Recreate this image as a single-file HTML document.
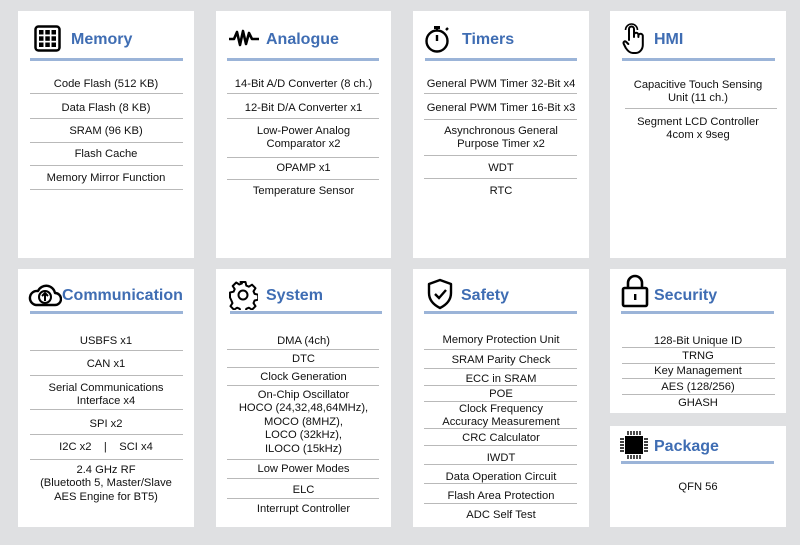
<!DOCTYPE html>
<html><head><meta charset="utf-8"><style>
*{margin:0;padding:0;box-sizing:border-box}
body{width:800px;height:545px;background:#dfe0e2;position:relative;overflow:hidden;font-family:"Liberation Sans",Arial,sans-serif;color:#111}
.c{position:absolute;background:#fff}
.t{position:absolute;font-size:11.2px;line-height:13.5px;text-align:center;white-space:nowrap;margin-top:1.5px}
.s{position:absolute;height:1px;background:#b9b9b9}
.b{position:absolute;height:3px;background:#9bb4d8}
.h{position:absolute;font-size:16px;font-weight:bold;color:#3f6db3;line-height:18px;margin-top:1px}
svg{position:absolute}
</style></head><body>
<div class="c" style="left:18px;top:11px;width:176px;height:247px"></div>
<div class="c" style="left:216px;top:11px;width:175px;height:247px"></div>
<div class="c" style="left:413px;top:11px;width:176px;height:247px"></div>
<div class="c" style="left:610px;top:11px;width:176px;height:247px"></div>
<div class="c" style="left:18px;top:269px;width:176px;height:258px"></div>
<div class="c" style="left:216px;top:269px;width:175px;height:258px"></div>
<div class="c" style="left:413px;top:269px;width:176px;height:258px"></div>
<div class="c" style="left:610px;top:269px;width:176px;height:144px"></div>
<div class="c" style="left:610px;top:426px;width:176px;height:101px"></div>

<!-- Memory -->
<svg style="left:34px;top:25px" width="27" height="27" viewBox="0 0 27 27"><rect x="1.5" y="1.5" width="24" height="24" rx="3" fill="none" stroke="#000" stroke-width="2.5"/><g fill="#000"><rect x="5" y="5" width="4.5" height="4.5"/><rect x="11.3" y="5" width="4.5" height="4.5"/><rect x="17.5" y="5" width="4.5" height="4.5"/><rect x="5" y="11.3" width="4.5" height="4.5"/><rect x="11.3" y="11.3" width="4.5" height="4.5"/><rect x="17.5" y="11.3" width="4.5" height="4.5"/><rect x="5" y="17.5" width="4.5" height="4.5"/><rect x="11.3" y="17.5" width="4.5" height="4.5"/><rect x="17.5" y="17.5" width="4.5" height="4.5"/></g></svg>
<div class="h" style="left:71px;top:30px">Memory</div>
<div class="b" style="left:30px;top:58px;width:153px"></div>
<div class="t" style="left:18px;width:176px;top:76px">Code Flash (512 KB)</div>
<div class="s" style="left:30px;top:93px;width:153px"></div>
<div class="t" style="left:18px;width:176px;top:100px">Data Flash (8 KB)</div>
<div class="s" style="left:30px;top:118px;width:153px"></div>
<div class="t" style="left:18px;width:176px;top:123px">SRAM (96 KB)</div>
<div class="s" style="left:30px;top:142px;width:153px"></div>
<div class="t" style="left:18px;width:176px;top:146px">Flash Cache</div>
<div class="s" style="left:30px;top:165px;width:153px"></div>
<div class="t" style="left:18px;width:176px;top:170px">Memory Mirror Function</div>
<div class="s" style="left:30px;top:189px;width:153px"></div>

<!-- Analogue -->
<svg style="left:228px;top:28px" width="32" height="20" viewBox="0 0 32 20"><path d="M1 11H6L9 4L12 17L15 3L18 16L21 5L24 11H31" fill="none" stroke="#000" stroke-width="2.6" stroke-linejoin="round"/></svg>
<div class="h" style="left:266px;top:30px">Analogue</div>
<div class="b" style="left:227px;top:58px;width:152px"></div>
<div class="t" style="left:216px;width:175px;top:76px">14-Bit A/D Converter (8 ch.)</div>
<div class="s" style="left:227px;top:93px;width:152px"></div>
<div class="t" style="left:216px;width:175px;top:100px">12-Bit D/A Converter x1</div>
<div class="s" style="left:227px;top:118px;width:152px"></div>
<div class="t" style="left:216px;width:175px;top:123px">Low-Power Analog<br>Comparator x2</div>
<div class="s" style="left:227px;top:157px;width:152px"></div>
<div class="t" style="left:216px;width:175px;top:160px">OPAMP x1</div>
<div class="s" style="left:227px;top:179px;width:152px"></div>
<div class="t" style="left:216px;width:175px;top:183px">Temperature Sensor</div>

<!-- Timers -->
<svg style="left:424px;top:24px" width="28" height="30" viewBox="0 0 28 30"><circle cx="13" cy="17" r="10.5" fill="none" stroke="#000" stroke-width="2.4"/><rect x="10" y="2" width="6" height="3" fill="#000"/><rect x="12" y="4" width="2" height="3" fill="#000"/><line x1="22" y1="6" x2="24" y2="4" stroke="#000" stroke-width="2.4"/><line x1="13" y1="11" x2="13" y2="17" stroke="#000" stroke-width="2.4"/></svg>
<div class="h" style="left:462px;top:30px">Timers</div>
<div class="b" style="left:425px;top:58px;width:152px"></div>
<div class="t" style="left:413px;width:176px;top:76px">General PWM Timer 32-Bit x4</div>
<div class="s" style="left:424px;top:93px;width:153px"></div>
<div class="t" style="left:413px;width:176px;top:100px">General PWM Timer 16-Bit x3</div>
<div class="s" style="left:424px;top:119px;width:153px"></div>
<div class="t" style="left:413px;width:176px;top:123px">Asynchronous General<br>Purpose Timer x2</div>
<div class="s" style="left:424px;top:155px;width:153px"></div>
<div class="t" style="left:413px;width:176px;top:160px">WDT</div>
<div class="s" style="left:424px;top:178px;width:153px"></div>
<div class="t" style="left:413px;width:176px;top:183px">RTC</div>

<!-- HMI -->
<svg style="left:622px;top:23px" width="24" height="32" viewBox="0 0 24 32"><path d="M7 17V6a2.5 2.5 0 0 1 5 0v8M12 12a2.2 2.2 0 0 1 4.4 0v2M16.4 13a2.2 2.2 0 0 1 4.4 0v9c0 4-3 8-7 8h-3c-3 0-5-2-7-5l-2-4c-1-2 1-3.5 2.5-2l2 2" fill="none" stroke="#000" stroke-width="2" stroke-linejoin="round" stroke-linecap="round"/><path d="M3.5 7a6 6 0 0 1 12 0" fill="none" stroke="#000" stroke-width="1.6"/></svg>
<div class="h" style="left:654px;top:30px">HMI</div>
<div class="b" style="left:622px;top:58px;width:153px"></div>
<div class="t" style="left:610px;width:176px;top:77px">Capacitive Touch Sensing<br>Unit (11 ch.)</div>
<div class="s" style="left:625px;top:108px;width:152px"></div>
<div class="t" style="left:610px;width:176px;top:114px">Segment LCD Controller<br>4com x 9seg</div>

<!-- Communication -->
<svg style="left:28px;top:281px" width="34" height="26" viewBox="0 0 34 26"><path d="M8 24H27a6 6 0 0 0 0-12a9 9 0 0 0-17-2A7 7 0 0 0 8 24Z" fill="none" stroke="#000" stroke-width="2.4" stroke-linejoin="round"/><circle cx="17" cy="16" r="6" fill="none" stroke="#000" stroke-width="2"/><path d="M17 20V12M14 15l3-3 3 3" fill="none" stroke="#000" stroke-width="2"/></svg>
<div class="h" style="left:62px;top:286px">Communication</div>
<div class="b" style="left:30px;top:311px;width:153px"></div>
<div class="t" style="left:18px;width:176px;top:333px">USBFS x1</div>
<div class="s" style="left:30px;top:350px;width:153px"></div>
<div class="t" style="left:18px;width:176px;top:356px">CAN x1</div>
<div class="s" style="left:30px;top:375px;width:153px"></div>
<div class="t" style="left:18px;width:176px;top:380px">Serial Communications<br>Interface x4</div>
<div class="s" style="left:30px;top:409px;width:153px"></div>
<div class="t" style="left:18px;width:176px;top:416px">SPI x2</div>
<div class="s" style="left:30px;top:434px;width:153px"></div>
<div class="t" style="left:18px;width:176px;top:439px">I2C x2 &nbsp;&nbsp; | &nbsp;&nbsp; SCI x4</div>
<div class="s" style="left:30px;top:459px;width:153px"></div>
<div class="t" style="left:18px;width:176px;top:462px">2.4 GHz RF<br>(Bluetooth 5, Master/Slave<br>AES Engine for BT5)</div>

<!-- System -->
<svg style="left:228px;top:280px" width="30" height="30" viewBox="0 0 30 30"><path d="M12.5 2h5l.8 3.6 2.6 1.1 3.1-2 3.5 3.5-2 3.1 1.1 2.6 3.6.8v5l-3.6.8-1.1 2.6 2 3.1-3.5 3.5-3.1-2-2.6 1.1-.8 3.6h-5l-.8-3.6-2.6-1.1-3.1 2-3.5-3.5 2-3.1-1.1-2.6L2 17.5v-5l3.6-.8 1.1-2.6-2-3.1 3.5-3.5 3.1 2 2.6-1.1Z" fill="none" stroke="#000" stroke-width="2" stroke-linejoin="round"/><circle cx="15" cy="15" r="4.5" fill="none" stroke="#000" stroke-width="2"/></svg>
<div class="h" style="left:266px;top:286px">System</div>
<div class="b" style="left:230px;top:311px;width:152px"></div>
<div class="t" style="left:216px;width:175px;top:333px">DMA (4ch)</div>
<div class="s" style="left:227px;top:349px;width:152px"></div>
<div class="t" style="left:216px;width:175px;top:351px">DTC</div>
<div class="s" style="left:227px;top:367px;width:152px"></div>
<div class="t" style="left:216px;width:175px;top:369px">Clock Generation</div>
<div class="s" style="left:227px;top:385px;width:152px"></div>
<div class="t" style="left:216px;width:175px;top:387px">On-Chip Oscillator<br>HOCO (24,32,48,64MHz),<br>MOCO (8MHZ),<br>LOCO (32kHz),<br>ILOCO (15kHz)</div>
<div class="s" style="left:227px;top:459px;width:152px"></div>
<div class="t" style="left:216px;width:175px;top:461px">Low Power Modes</div>
<div class="s" style="left:227px;top:478px;width:152px"></div>
<div class="t" style="left:216px;width:175px;top:482px">ELC</div>
<div class="s" style="left:227px;top:498px;width:152px"></div>
<div class="t" style="left:216px;width:175px;top:501px">Interrupt Controller</div>

<!-- Safety -->
<svg style="left:426px;top:278px" width="28" height="32" viewBox="0 0 28 32"><path d="M14 2L25 6V15C25 22 20 27 14 30C8 27 3 22 3 15V6Z" fill="none" stroke="#000" stroke-width="2.4" stroke-linejoin="round"/><path d="M9 16l4 4 7-8" fill="none" stroke="#000" stroke-width="2.4"/></svg>
<div class="h" style="left:461px;top:286px">Safety</div>
<div class="b" style="left:424px;top:311px;width:153px"></div>
<div class="t" style="left:413px;width:176px;top:332px">Memory Protection Unit</div>
<div class="s" style="left:424px;top:349px;width:153px"></div>
<div class="t" style="left:413px;width:176px;top:352px">SRAM Parity Check</div>
<div class="s" style="left:424px;top:368px;width:153px"></div>
<div class="t" style="left:413px;width:176px;top:371px">ECC in SRAM</div>
<div class="s" style="left:424px;top:385px;width:153px"></div>
<div class="t" style="left:413px;width:176px;top:386px">POE</div>
<div class="s" style="left:424px;top:401px;width:153px"></div>
<div class="t" style="left:413px;width:176px;top:401px">Clock Frequency<br>Accuracy Measurement</div>
<div class="s" style="left:424px;top:428px;width:153px"></div>
<div class="t" style="left:413px;width:176px;top:430px">CRC Calculator</div>
<div class="s" style="left:424px;top:445px;width:153px"></div>
<div class="t" style="left:413px;width:176px;top:450px">IWDT</div>
<div class="s" style="left:424px;top:464px;width:153px"></div>
<div class="t" style="left:413px;width:176px;top:469px">Data Operation Circuit</div>
<div class="s" style="left:424px;top:483px;width:153px"></div>
<div class="t" style="left:413px;width:176px;top:488px">Flash Area Protection</div>
<div class="s" style="left:424px;top:503px;width:153px"></div>
<div class="t" style="left:413px;width:176px;top:507px">ADC Self Test</div>

<!-- Security -->
<svg style="left:621px;top:274px" width="28" height="34" viewBox="0 0 28 34"><path d="M7 14V9a7 7 0 0 1 14 0v5" fill="none" stroke="#000" stroke-width="2.6"/><rect x="2" y="14" width="24" height="18" rx="1.5" fill="none" stroke="#000" stroke-width="2.6"/><rect x="13" y="20" width="2.4" height="6" fill="#000"/></svg>
<div class="h" style="left:654px;top:286px">Security</div>
<div class="b" style="left:621px;top:311px;width:153px"></div>
<div class="t" style="left:610px;width:176px;top:333px">128-Bit Unique ID</div>
<div class="s" style="left:622px;top:347px;width:153px"></div>
<div class="t" style="left:610px;width:176px;top:348px">TRNG</div>
<div class="s" style="left:622px;top:363px;width:153px"></div>
<div class="t" style="left:610px;width:176px;top:363px">Key Management</div>
<div class="s" style="left:622px;top:378px;width:153px"></div>
<div class="t" style="left:610px;width:176px;top:379px">AES (128/256)</div>
<div class="s" style="left:622px;top:394px;width:153px"></div>
<div class="t" style="left:610px;width:176px;top:395px">GHASH</div>

<!-- Package -->
<svg style="left:619px;top:430px" width="30" height="30" viewBox="0 0 30 30"><rect x="6" y="6" width="18" height="18" fill="#000"/><g stroke="#000" stroke-width="1.4"><path d="M9 1v4M12 1v4M15 1v4M18 1v4M21 1v4M9 25v4M12 25v4M15 25v4M18 25v4M21 25v4M1 9h4M1 12h4M1 15h4M1 18h4M1 21h4M25 9h4M25 12h4M25 15h4M25 18h4M25 21h4"/></g></svg>
<div class="h" style="left:654px;top:437px">Package</div>
<div class="b" style="left:621px;top:461px;width:153px"></div>
<div class="t" style="left:610px;width:176px;top:479px">QFN 56</div>
</body></html>
